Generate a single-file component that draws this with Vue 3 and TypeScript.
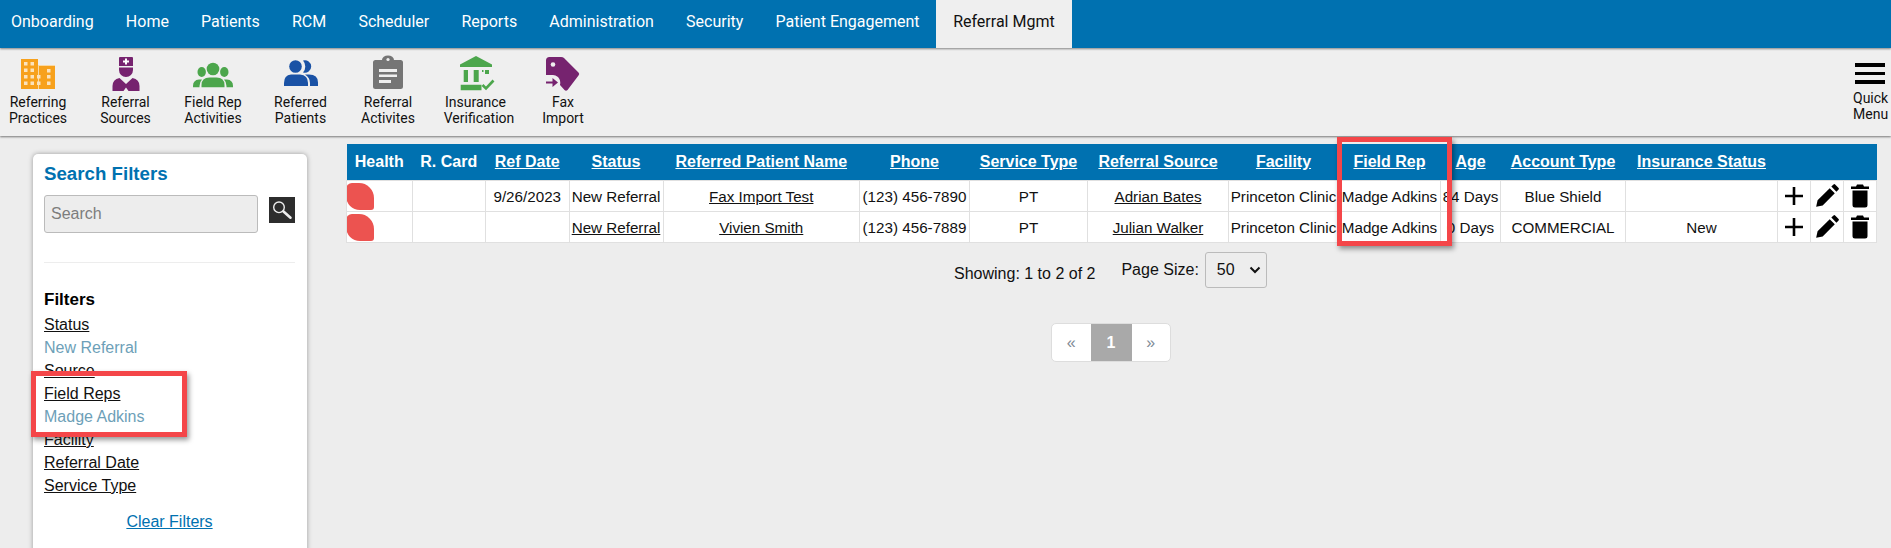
<script setup lang="ts">
const navItems = ['Onboarding', 'Home', 'Patients', 'RCM', 'Scheduler', 'Reports', 'Administration', 'Security', 'Patient Engagement', 'Referral Mgmt']
const tools = [
  { id: 'building', l1: 'Referring', l2: 'Practices' },
  { id: 'doctor', l1: 'Referral', l2: 'Sources' },
  { id: 'group', l1: 'Field Rep', l2: 'Activities' },
  { id: 'friends', l1: 'Referred', l2: 'Patients' },
  { id: 'clipboard', l1: 'Referral', l2: 'Activites' },
  { id: 'bank', l1: 'Insurance', l2: 'Verification' },
  { id: 'tag', l1: 'Fax', l2: 'Import' },
]
const columns = [
  { name: 'Health', w: 65.5, link: false },
  { name: 'R. Card', w: 73.5, link: false },
  { name: 'Ref Date', w: 83.5, link: true },
  { name: 'Status', w: 94, link: true },
  { name: 'Referred Patient Name', w: 196.5, link: true },
  { name: 'Phone', w: 110, link: true },
  { name: 'Service Type', w: 118, link: true },
  { name: 'Referral Source', w: 141, link: true },
  { name: 'Facility', w: 110, link: true },
  { name: 'Field Rep', w: 102, link: true },
  { name: 'Age', w: 60, link: true },
  { name: 'Account Type', w: 125, link: true },
  { name: 'Insurance Status', w: 152, link: true },
  { name: '', w: 33, link: false },
  { name: '', w: 33, link: false },
  { name: '', w: 33, link: false },
]
const rows = [
  { date: '9/26/2023', status: 'New Referral', statusLink: false, name: 'Fax Import Test', phone: '(123) 456-7890', type: 'PT', source: 'Adrian Bates', facility: 'Princeton Clinic', rep: 'Madge Adkins', age: '84 Days', account: 'Blue Shield', ins: '' },
  { date: '', status: 'New Referral', statusLink: true, name: 'Vivien Smith', phone: '(123) 456-7889', type: 'PT', source: 'Julian Walker', facility: 'Princeton Clinic', rep: 'Madge Adkins', age: '0 Days', account: 'COMMERCIAL', ins: 'New' },
]
const filters = [
  { t: 'Status', v: false },
  { t: 'New Referral', v: true },
  { t: 'Source', v: false },
  { t: 'Field Reps', v: false },
  { t: 'Madge Adkins', v: true },
  { t: 'Facility', v: false },
  { t: 'Referral Date', v: false },
  { t: 'Service Type', v: false },
]
</script>

<template>
  <div class="page">
    <nav class="nav">
      <a v-for="n in navItems" :key="n" class="nav-item" :class="{ active: n === 'Referral Mgmt' }">{{ n }}</a>
    </nav>

    <div class="toolbar">
      <div v-for="t in tools" :key="t.id" class="tool">
        <svg class="tool-icon" width="48" height="40" viewBox="0 0 48 40">
          <template v-if="t.id === 'building'">
            <path fill="#f7a11c" d="M7 5h17v6h17v24H7z" />
            <path fill="#f9d9a4" d="M24 11h17v1H24zM24 12h1v23h-1z" />
            <path fill="#fbe3bd" d="M10 8h3.500v3.500H10zM16.500 8H20v3.500h-3.500zM10 14.500h3.500V18H10zM16.500 14.500H20V18h-3.500zM10 21h3.500v3.500H10zM16.500 21H20v3.500h-3.500zM23 21h3.500v3.500H23zM10 27.500h3.500V31H10zM16.500 27.500H20V31h-3.500zM23 27.500h3.500V31H23zM33 15h3.500v3.500H33zM33 21h3.500v3.500H33zM33 27.500h3.500V31H33z" />
          </template>
          <template v-else-if="t.id === 'doctor'">
            <path fill="#76236f" d="M17 4q0-1 1-1h12q1 0 1 1v8H17z" />
            <path fill="#fff" d="M23 4.500h2v2h2v2h-2v2h-2v-2h-2v-2h2z" />
            <path fill="#76236f" d="M17 13.500h14V16a7 7 0 0 1-14 0zM10.500 37v-5q0-6.500 7-8l6.500 6 6.500-6q7 1.500 7 8v5z" />
            <path fill="#efefef" d="M21.500 37l2.500-3.500 2.500 3.500z" />
          </template>
          <template v-else-if="t.id === 'group'">
            <g fill="#4ca64c">
              <circle cx="24" cy="15" r="6.300" />
              <ellipse cx="12.700" cy="18" rx="4.200" ry="5" />
              <ellipse cx="35.300" cy="18" rx="4.200" ry="5" />
              <path d="M12.500 33.300V31q0-7.500 8-7.500h7q8 0 8 7.500v2.300z" />
              <path d="M4 33.300V32q0-6 6-6.500h3q-2.500 2.500-2.500 6.500v1.300zM44 33.300V32q0-6-6-6.500h-3q2.500 2.500 2.500 6.500v1.300z" />
            </g>
          </template>
          <template v-else-if="t.id === 'friends'">
            <g fill="#1a52a5">
              <circle cx="18.500" cy="12.500" r="6.300" />
              <path d="M7 32v-3q0-8 7-8.500h9q8 .5 8 8.500v3z" />
              <path d="M26 6.500a6.300 6.300 0 1 1 0 12 9 9 0 0 0 0-12zM28 20.500h4q9 0 9 8v3.500h-8v-3q0-5.500-5-8.500z" />
            </g>
          </template>
          <template v-else-if="t.id === 'clipboard'">
            <path fill="#757575" d="M11.500 6H18a6 4.500 0 0 1 12 0h6.500q2.500 0 2.500 2.500v24q0 2.500-2.500 2.500h-25Q9 35 9 32.500v-24Q9 6 11.500 6z" />
            <circle cx="24" cy="5.500" r="1.600" fill="#efefef" />
            <path fill="#efefef" d="M15 15h18v3H15zM15 20.500h18v2.500H15zM15 26h12v3H15z" />
          </template>
          <template v-else-if="t.id === 'bank'">
            <g fill="#4ca64c">
              <path d="M24 2l16 8.500V13H8v-2.500zM11.700 16H16v12h-4.300zM21.700 16h5v12h-5zM33 16h4v4h-4zM30 16h1.500v2H30zM8.700 30.700h20.800v5.600H8.700z" />
            </g>
            <path fill="none" stroke="#4ca64c" stroke-width="2.600" d="M30.500 31l3.500 3.500 7.500-8" />
          </template>
          <template v-else>
            <path fill="#76236f" d="M7 6.500q0-3.500 3.500-3.500H22q2 0 3 1l14.500 14.500q1.500 1.500 0 3L28.500 36q-1.500 1.500-3 0L21 31q1-5-2-8-2.500-2-5-2H7z" />
            <circle cx="14" cy="10.500" r="2.300" fill="#efefef" />
            <path fill="#76236f" d="M7 27.500h6.500V24l5.500 4.500-5.500 4.500v-3.500H7z" />
          </template>
        </svg>
        <span class="tool-label">{{ t.l1 }}</span>
        <span class="tool-label" :class="{ shift: t.id === 'bank' }">{{ t.l2 }}</span>
      </div>
      <div class="quick">
        <span class="burger"><i></i><i></i><i></i></span>
        <span class="quick-label">Quick</span>
        <span class="quick-label">Menu</span>
      </div>
    </div>

    <div class="main">
      <aside class="card">
        <h2 class="card-title">Search Filters</h2>
        <div class="search-row">
          <input class="search" placeholder="Search" />
          <button class="search-btn" aria-label="Search">
            <svg width="26" height="26" viewBox="0 0 26 26">
              <circle cx="10" cy="10.300" r="5.300" fill="none" stroke="#eee" stroke-width="1.400" />
              <path d="M14.500 14.500l7 6.200" stroke="#eee" stroke-width="2.600" stroke-linecap="round" />
            </svg>
          </button>
        </div>
        <hr class="rule" />
        <div class="filters-title">Filters</div>
        <ul class="filters">
          <li v-for="f in filters" :key="f.t" :class="f.v ? 'val' : 'key'">{{ f.t }}</li>
        </ul>
        <a class="clear">Clear Filters</a>
        <div class="mark mark-left"></div>
      </aside>

      <section class="content">
        <table class="grid">
          <colgroup>
            <col v-for="(c, i) in columns" :key="i" :style="{ width: c.w + 'px' }" />
          </colgroup>
          <thead>
            <tr>
              <th v-for="(c, i) in columns" :key="i" :class="{ link: c.link }">{{ c.name }}</th>
            </tr>
          </thead>
          <tbody>
            <tr v-for="r in rows" :key="r.name">
              <td class="health"><span class="leaf"></span></td>
              <td></td>
              <td>{{ r.date }}</td>
              <td :class="{ u: r.statusLink }">{{ r.status }}</td>
              <td class="u">{{ r.name }}</td>
              <td>{{ r.phone }}</td>
              <td>{{ r.type }}</td>
              <td class="u">{{ r.source }}</td>
              <td class="over">{{ r.facility }}</td>
              <td>{{ r.rep }}</td>
              <td>{{ r.age }}</td>
              <td>{{ r.account }}</td>
              <td>{{ r.ins }}</td>
              <td class="act">
                <svg width="20" height="20" viewBox="0 0 20 20"><path d="M8.700 1h2.600v7.700H19v2.600h-7.700V19H8.700v-7.700H1V8.700h7.700z" /></svg>
              </td>
              <td class="act">
                <svg width="26" height="26" viewBox="0 0 24 24"><path d="M2 22l1.300-6L14.500 4.800l4.700 4.700L8 20.700zM16 3.300l2-2q.8-.7 1.500 0l3.200 3.200q.7.700 0 1.500l-2 2z" /></svg>
              </td>
              <td class="act">
                <svg width="20" height="24" viewBox="0 0 20 24"><path d="M7 .500h6l1 2h5v2.500H1V2.500h5zM2.500 6.500h15V21q0 2.500-2.500 2.500H5q-2.500 0-2.500-2.500z" /></svg>
              </td>
            </tr>
          </tbody>
        </table>

        <div class="summary">
          <span class="showing">Showing: 1 to 2 of 2</span>
          <span class="size-label">Page Size:</span>
          <span class="size-select">
            <span>50</span>
            <svg width="12" height="8" viewBox="0 0 12 8"><path d="M1.500 1.500L6 6l4.500-4.500" fill="none" stroke="#111" stroke-width="2" /></svg>
          </span>
        </div>

        <div class="pager">
          <span class="pg">«</span>
          <span class="pg on">1</span>
          <span class="pg">»</span>
        </div>

        <div class="mark mark-right"></div>
      </section>
    </div>
  </div>
</template>

<style>
html, body { margin: 0; background: #ededed; }
</style>

<style scoped>
.page {
  height: 548px;
  overflow: hidden;
  background: #ededed;
  font-family: "Liberation Sans", Arial, sans-serif;
  color: #111;
  position: relative;
}
.nav {
  height: 48px;
  background: #0071b0;
  display: flex;
  font-family: Roboto, sans-serif;
  font-size: 16px;
  position: relative;
  z-index: 2;
  box-shadow: 0 1px 2px rgba(0, 0, 0, .45);
}
.nav-item {
  color: #fff;
  padding: 0 16.100px;
  line-height: 44px;
  white-space: nowrap;
}
.nav-item:first-child { padding-left: 11px; }
.nav-item.active {
  background: #efefef;
  color: #111;
  padding: 0 17.500px;
}
.toolbar {
  height: 88px;
  background: #efefef;
  display: flex;
  gap: 23.500px;
  padding-left: 6px;
  box-shadow: 0 1px 2px rgba(0, 0, 0, .5);
  position: relative;
  font-family: Roboto, sans-serif;
}
.tool {
  width: 64px;
  display: flex;
  flex-direction: column;
  align-items: center;
  padding-top: 6px;
}
.tool-icon { display: block; }
.tool-label {
  font-size: 14px;
  line-height: 16px;
  white-space: nowrap;
}
.tool-label.shift { margin-left: 7px; }
.quick {
  margin-left: auto;
  padding: 15px 4px 0 0;
  display: flex;
  flex-direction: column;
  align-items: flex-end;
}
.burger {
  width: 30px;
  display: flex;
  flex-direction: column;
  gap: 5px;
  margin-right: 2px;
  margin-bottom: 6px;
}
.burger i { display: block; height: 3.500px; background: #000; }
.quick-label { font-size: 14px; line-height: 16px; width: 34px; white-space: nowrap; }
.main {
  display: flex;
  align-items: flex-start;
}
.card {
  position: relative;
  width: 274px;
  height: 500px;
  margin: 18px 0 0 33px;
  flex: none;
  background: #fff;
  border-radius: 5px 5px 0 0;
  box-shadow: 0 0 5px rgba(0, 0, 0, .35);
  padding: 9px 12px 0 11px;
  box-sizing: border-box;
}
.card-title {
  margin: 0;
  font-size: 18.700px;
  line-height: 22px;
  font-weight: 700;
  color: #0071b0;
}
.search-row {
  display: flex;
  align-items: flex-start;
  justify-content: space-between;
  margin-top: 10px;
}
.search {
  width: 214px;
  height: 38px;
  box-sizing: border-box;
  background: #ededed;
  border: 1px solid #bbb;
  border-radius: 3px;
  padding: 0 6px;
  font: 16px "Liberation Sans", Arial, sans-serif;
  outline: none;
}
.search::placeholder { color: #7d7d7d; opacity: 1; }
.search-btn {
  width: 26px;
  height: 26px;
  margin-top: 2px;
  padding: 0;
  border: 0;
  background: #2d2d2d;
  display: block;
}
.search-btn svg { display: block; }
.rule {
  border: 0;
  border-top: 1px solid #ededed;
  margin: 29px 0 0;
}
.filters-title {
  margin-top: 27px;
  font-size: 17px;
  line-height: 20px;
  font-weight: 700;
  color: #000;
}
.filters {
  list-style: none;
  margin: 3px 0 0;
  padding: 0;
  font-size: 16px;
  line-height: 23px;
}
.key { text-decoration: underline; color: #111; }
.val { color: #6d9fb8; }
.clear {
  display: block;
  margin-top: 13px;
  text-align: center;
  font-size: 16px;
  line-height: 23px;
  color: #0071b0;
  text-decoration: underline;
}
.mark {
  position: absolute;
  box-sizing: border-box;
  border: 5px solid #f44649;
  box-shadow: 2px 3px 5px rgba(0, 0, 0, .4);
  z-index: 3;
}
.mark-left { left: -2px; top: 217px; width: 156px; height: 66px; }
.mark-right { left: 991px; top: -7px; width: 115px; height: 109px; }
.content {
  position: relative;
  margin: 8px 0 0 39px;
  width: 1530px;
  flex: none;
}
.grid {
  width: 1530px;
  table-layout: fixed;
  border-collapse: collapse;
  font-size: 15.200px;
}
.grid th {
  background: #0071b0;
  color: #fff;
  height: 36px;
  padding: 0;
  font-size: 16px;
  font-weight: 700;
  white-space: nowrap;
}
.grid th.link { text-decoration: underline; }
.grid td {
  background: #fff;
  border: 1px solid #e0e0e0;
  height: 30px;
  padding: 0;
  text-align: center;
  white-space: nowrap;
  overflow: visible;
}
.grid td.u { text-decoration: underline; }
.grid td.health { padding: 0; text-align: left; }
.leaf {
  display: block;
  width: 28px;
  height: 27px;
  margin-left: -1px;
  background: #ec5350;
  border-radius: 6px 15px 3px 14px;
}
.grid td.act { line-height: 0; }
.act svg { fill: #000; display: inline-block; vertical-align: middle; }
.summary {
  display: flex;
  align-items: flex-start;
  margin-top: 9px;
  font-size: 16px;
  height: 36px;
  padding-left: 608px;
}
.showing { margin-top: 13px; line-height: 18px; white-space: nowrap; }
.size-label { margin: 9px 6px 0 26px; line-height: 18px; white-space: nowrap; }
.size-select {
  width: 62px;
  height: 36px;
  box-sizing: border-box;
  border: 1px solid #bbb;
  border-radius: 3px;
  display: flex;
  align-items: center;
  justify-content: space-between;
  padding: 0 5px 0 11px;
  font-size: 16px;
}
.pager {
  width: 120px;
  height: 39px;
  box-sizing: border-box;
  margin: 35px 0 0 705px;
  display: flex;
  background: #fff;
  border: 1px solid #ddd;
  border-radius: 5px;
  overflow: hidden;
  font-size: 16px;
}
.pg {
  flex: 1;
  display: flex;
  align-items: center;
  justify-content: center;
  color: #7e8a95;
}
.pg.on {
  flex: none;
  width: 41px;
  background: #a9a9a9;
  color: #fff;
  font-weight: 700;
}
</style>
